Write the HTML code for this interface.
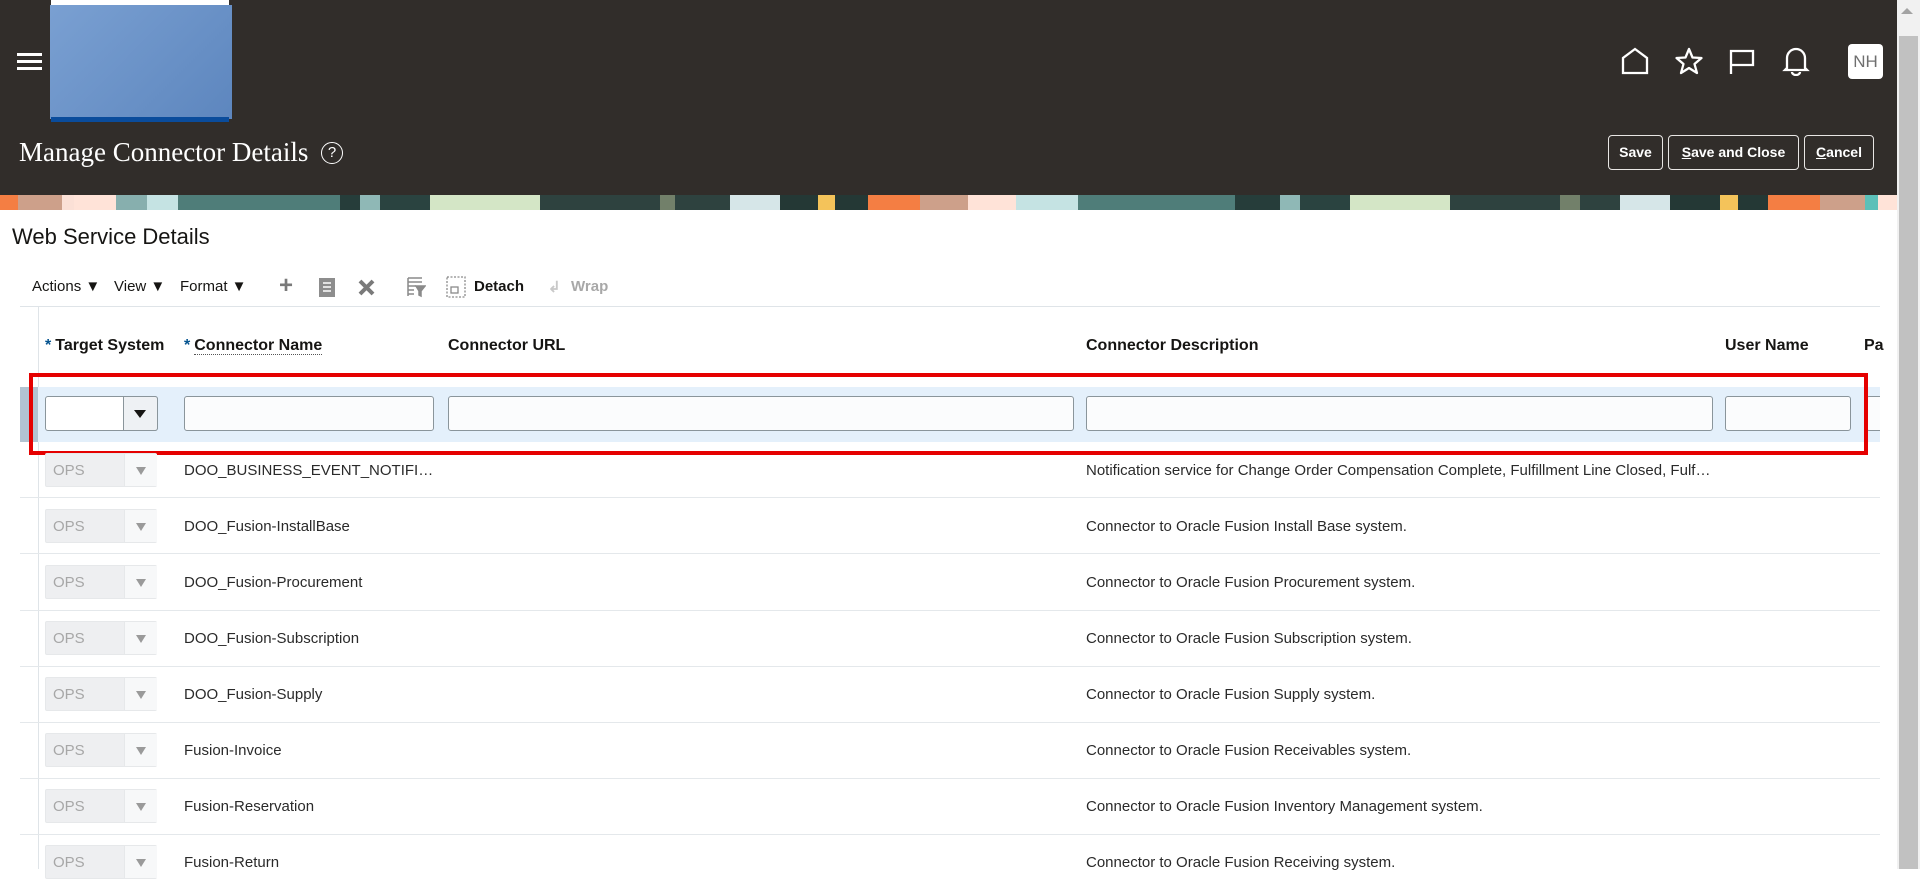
<!DOCTYPE html>
<html><head><meta charset="utf-8">
<style>
*{box-sizing:border-box;margin:0;padding:0}
body{width:1920px;height:869px;overflow:hidden;background:#fff;font-family:"Liberation Sans",Arial,sans-serif;position:relative;color:#161513}
.abs{position:absolute}
#hdr{left:0;top:0;width:1897px;height:195px;background:#312d2a}
#banner{left:0;top:195px;width:1897px;height:15px;
background:linear-gradient(90deg,#f47e43 0 18px,#cda08a 18px 62px,#fbe0d6 62px 74px,#ffe3d8 74px 116px,#87afae 116px 147px,#c5e3e3 147px 178px,#4f7d79 178px 340px,#263d3a 340px 360px,#8fb8b6 360px 380px,#2a4340 380px 430px,#d4e6c6 430px 540px,#2e423f 540px 660px,#72806a 660px 675px,#2e423f 675px 730px,#d6e6e8 730px 780px,#243835 780px 818px,#f4c35a 818px 835px,#243835 835px 868px,#f47e43 868px 920px,#cda08a 920px 968px,#ffe3d8 968px 1016px,#c5e3e3 1016px 1078px,#4f7d79 1078px 1235px,#263d3a 1235px 1280px,#8fb8b6 1280px 1300px,#2a4340 1300px 1350px,#d4e6c6 1350px 1450px,#2e423f 1450px 1560px,#72806a 1560px 1580px,#2e423f 1580px 1620px,#d6e6e8 1620px 1670px,#243835 1670px 1720px,#f4c35a 1720px 1738px,#243835 1738px 1768px,#f47e43 1768px 1820px,#cda08a 1820px 1865px,#5cc0b8 1865px 1878px,#ffe3d8 1878px 1897px)}
#sb{left:1897px;top:0;width:23px;height:869px;background:#f1f1f1}
#sbt{left:1899px;top:36px;width:19px;height:833px;background:#c1c1c1}
.btn{position:absolute;top:135px;height:35px;border:1px solid #e8e6e4;border-radius:4px;color:#fff;font-weight:bold;font-size:14px;line-height:33px;text-align:center}
.tb{position:absolute;top:278px;font-size:15px;color:#161513}
.th{position:absolute;top:337px;font-size:16px;font-weight:bold;color:#161513}
.star{color:#04538f;font-weight:bold;margin-right:4px}
.inp{position:absolute;top:396px;height:35px;background:#fbfcfd;border:1px solid #8a959b;border-radius:3px}
.sep{position:absolute;left:20px;width:1860px;height:1px;background:#e4e8eb}
.ops{position:absolute;left:45px;width:112px;height:34px;background:#eeeff1;border:1px solid #e6e8ea;border-radius:2px}
.ops span{position:absolute;left:7px;top:8px;font-size:15px;color:#a7a7a7}
.ops i{position:absolute;left:78px;top:0;width:33px;height:32px;background:#f7f8f9;border-left:1px solid #e6e8ea}
.ops i:after{content:"";position:absolute;left:11px;top:13px;border-left:5px solid transparent;border-right:5px solid transparent;border-top:8px solid #9a9a9a}
.cell{position:absolute;font-size:15px;color:#2a2a2a}
</style></head><body>
<div id="hdr" class="abs"></div>
<div id="banner" class="abs"></div>
<div id="sb" class="abs"></div><div id="sbt" class="abs"></div>
<div class="abs" style="left:1901px;top:8px;border-left:6px solid transparent;border-right:6px solid transparent;border-bottom:6px solid #a3a3a3"></div>

<div class="abs" style="left:17px;top:53px;width:25px;height:3px;background:#fff"></div>
<div class="abs" style="left:17px;top:60px;width:25px;height:3px;background:#fff"></div>
<div class="abs" style="left:17px;top:67px;width:25px;height:3px;background:#fff"></div>
<div class="abs" style="left:51px;top:0;width:178px;height:6px;background:#fff"></div>
<div class="abs" style="left:50px;top:5px;width:182px;height:114px;background:linear-gradient(135deg,#7aa0d2,#5d86be)"></div>
<div class="abs" style="left:51px;top:117px;width:178px;height:5px;background:#0a4c9c"></div>

<div class="abs" style="left:19px;top:137px;font-family:'Liberation Serif',serif;font-size:27px;color:#fff">Manage Connector Details</div>
<div class="abs" style="left:321px;top:142px;width:22px;height:22px;border:1.5px solid #fff;border-radius:50%;color:#fff;font-size:15px;text-align:center;line-height:19px">?</div>

<svg class="abs" style="left:1620px;top:46px" width="30" height="30" viewBox="0 0 30 30" fill="none" stroke="#fff" stroke-width="2.3"><path d="M3 27V12L15 3L27 12V27Z"/></svg>
<svg class="abs" style="left:1674px;top:46px" width="30" height="30" viewBox="0 0 30 30" fill="none" stroke="#fff" stroke-width="2.3" stroke-linejoin="round"><path d="M15 3L18.5 11.5L27.5 12L20.5 18L23 27L15 22L7 27L9.5 18L2.5 12L11.5 11.5Z"/></svg>
<svg class="abs" style="left:1728px;top:48px" width="28" height="28" viewBox="0 0 28 28" fill="none" stroke="#fff" stroke-width="2.3"><path d="M3 26V3H25V17H3"/></svg>
<svg class="abs" style="left:1782px;top:46px" width="28" height="30" viewBox="0 0 28 30" fill="none" stroke="#fff" stroke-width="2.3"><path d="M5 22V12A9 9 0 0 1 23 12V22L25 24H3Z"/><path d="M10 26A4 3 0 0 0 18 26"/></svg>
<div class="abs" style="left:1848px;top:44px;width:35px;height:35px;background:#fff;border-radius:4px;color:#6f6f6f;font-size:17px;text-align:center;line-height:35px">NH</div>

<div class="btn" style="left:1608px;width:55px">Save</div>
<div class="btn" style="left:1668px;width:131px"><u>S</u>ave and Close</div>
<div class="btn" style="left:1804px;width:70px"><u>C</u>ancel</div>

<div class="abs" style="left:12px;top:224px;font-size:22px;color:#161513">Web Service Details</div>

<div class="tb" style="left:32px">Actions ▼</div>
<div class="tb" style="left:114px">View ▼</div>
<div class="tb" style="left:180px">Format ▼</div>
<div class="tb" style="left:279px;font-size:24px;top:272px;font-weight:bold;color:#7a7a7a">+</div>
<svg class="abs" style="left:318px;top:277px" width="18" height="21" viewBox="0 0 18 21"><rect x="1" y="1" width="16" height="19" fill="#8d8d8d"/><path d="M5 6H13M5 10H13M5 14H13" stroke="#fff" stroke-width="1.5"/></svg>
<svg class="abs" style="left:357px;top:278px" width="19" height="19" viewBox="0 0 19 19"><path d="M3 3L16 16M16 3L3 16" stroke="#7a7a7a" stroke-width="4"/></svg>
<svg class="abs" style="left:406px;top:276px" width="20" height="22" viewBox="0 0 20 22" fill="none" stroke="#8a8a8a" stroke-width="1.5"><path d="M2 2H16M2 6H16M2 10H10M2 14H8M2 18H8M2 2V20"/><path d="M10 10H19L15 15V20L13 19V15Z" fill="#8a8a8a"/></svg>
<svg class="abs" style="left:446px;top:276px" width="20" height="22" viewBox="0 0 20 22" fill="none" stroke="#8a8a8a" stroke-width="1.3" stroke-dasharray="2 1.5"><rect x="1" y="1" width="18" height="20"/><rect x="5" y="11" width="7" height="6" stroke-dasharray="none"/></svg>
<div class="tb" style="left:474px;font-weight:bold">Detach</div>
<div class="tb" style="left:548px;color:#c8c8c8;font-weight:bold">↲</div>
<div class="tb" style="left:571px;color:#a8a8a8;font-weight:bold">Wrap</div>
<div class="abs" style="left:20px;top:306px;width:1860px;height:1px;background:#dfe4e8"></div>
<div class="abs" style="left:38px;top:307px;width:1px;height:562px;background:#dfe4e8"></div>

<div class="th" style="left:45px"><span class="star">*</span>Target System</div>
<div class="th" style="left:184px"><span class="star">*</span><span style="border-bottom:1px dotted #555">Connector Name</span></div>
<div class="th" style="left:448px">Connector URL</div>
<div class="th" style="left:1086px">Connector Description</div>
<div class="th" style="left:1725px">User Name</div>
<div class="th" style="left:1864px">Pa</div>

<div class="abs" style="left:38px;top:387px;width:1842px;height:55px;background:#e4f0fb"></div>
<div class="abs" style="left:20px;top:387px;width:18px;height:55px;background:#b2c4d2"></div>
<div class="inp" style="left:45px;width:113px;background:#fff"></div>
<div class="abs" style="left:123px;top:396px;width:35px;height:35px;background:#eef1f4;border:1px solid #8a959b;border-radius:0 3px 3px 0"></div>
<div class="abs" style="left:134px;top:410px;border-left:6px solid transparent;border-right:6px solid transparent;border-top:8px solid #161513"></div>
<div class="inp" style="left:184px;width:250px"></div>
<div class="inp" style="left:448px;width:626px"></div>
<div class="inp" style="left:1086px;width:627px"></div>
<div class="inp" style="left:1725px;width:126px"></div>
<div class="inp" style="left:1866px;width:14px;border-right:none;border-radius:3px 0 0 3px"></div>
<div class="abs" style="left:29px;top:373px;width:1839px;height:82px;border:4px solid #e50000"></div>

<div class="ops" style="top:453px"><span>OPS</span><i></i></div>
<div class="cell" style="left:184px;top:462px">DOO_BUSINESS_EVENT_NOTIFI…</div>
<div class="cell" style="left:1086px;top:462px">Notification service for Change Order Compensation Complete, Fulfillment Line Closed, Fulf…</div>
<div class="sep" style="top:497px"></div>
<div class="ops" style="top:509px"><span>OPS</span><i></i></div>
<div class="cell" style="left:184px;top:518px">DOO_Fusion-InstallBase</div>
<div class="cell" style="left:1086px;top:518px">Connector to Oracle Fusion Install Base system.</div>
<div class="sep" style="top:553px"></div>
<div class="ops" style="top:565px"><span>OPS</span><i></i></div>
<div class="cell" style="left:184px;top:574px">DOO_Fusion-Procurement</div>
<div class="cell" style="left:1086px;top:574px">Connector to Oracle Fusion Procurement system.</div>
<div class="sep" style="top:610px"></div>
<div class="ops" style="top:621px"><span>OPS</span><i></i></div>
<div class="cell" style="left:184px;top:630px">DOO_Fusion-Subscription</div>
<div class="cell" style="left:1086px;top:630px">Connector to Oracle Fusion Subscription system.</div>
<div class="sep" style="top:666px"></div>
<div class="ops" style="top:677px"><span>OPS</span><i></i></div>
<div class="cell" style="left:184px;top:686px">DOO_Fusion-Supply</div>
<div class="cell" style="left:1086px;top:686px">Connector to Oracle Fusion Supply system.</div>
<div class="sep" style="top:722px"></div>
<div class="ops" style="top:733px"><span>OPS</span><i></i></div>
<div class="cell" style="left:184px;top:742px">Fusion-Invoice</div>
<div class="cell" style="left:1086px;top:742px">Connector to Oracle Fusion Receivables system.</div>
<div class="sep" style="top:778px"></div>
<div class="ops" style="top:789px"><span>OPS</span><i></i></div>
<div class="cell" style="left:184px;top:798px">Fusion-Reservation</div>
<div class="cell" style="left:1086px;top:798px">Connector to Oracle Fusion Inventory Management system.</div>
<div class="sep" style="top:834px"></div>
<div class="ops" style="top:845px"><span>OPS</span><i></i></div>
<div class="cell" style="left:184px;top:854px">Fusion-Return</div>
<div class="cell" style="left:1086px;top:854px">Connector to Oracle Fusion Receiving system.</div>
</body></html>
